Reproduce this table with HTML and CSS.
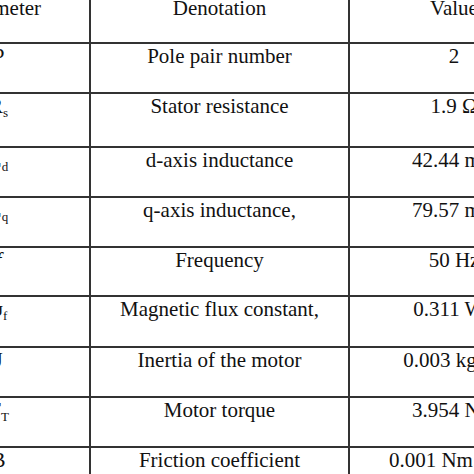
FILE: index.html
```html
<!DOCTYPE html>
<html>
<head>
<meta charset="utf-8">
<link rel="stylesheet" href="styles.css">
</head>
<body>
<table class="params">
  <colgroup>
    <col class="c-sym">
    <col class="c-den">
    <col class="c-val">
  </colgroup>
  <tr class="r-head"><th>Parameter</th><th>Denotation</th><th>Value</th></tr>
  <tr class="r-std"><td>P</td><td>Pole pair number</td><td>2</td></tr>
  <tr class="r-tall"><td>R<sub>s</sub></td><td>Stator resistance</td><td>1.9 Ω</td></tr>
  <tr class="r-std"><td>L<sub>d</sub></td><td>d-axis inductance</td><td>42.44 mH</td></tr>
  <tr class="r-std"><td>L<sub>q</sub></td><td>q-axis inductance,</td><td>79.57 mH</td></tr>
  <tr class="r-short"><td><i>f</i></td><td>Frequency</td><td>50 Hz</td></tr>
  <tr class="r-long"><td>ψ<sub>f</sub></td><td>Magnetic flux constant,</td><td>0.311 Wb</td></tr>
  <tr class="r-std"><td>J</td><td>Inertia of the motor</td><td>0.003 kg.m²</td></tr>
  <tr class="r-std"><td>T<sub>T</sub></td><td>Motor torque</td><td>3.954 Nm</td></tr>
  <tr class="r-std"><td>B</td><td>Friction coefficient</td><td>0.001 Nm.s/rad</td></tr>
</table>
</body>
</html>
```
FILE: styles.css
```css
html, body {
  margin: 0;
  padding: 0;
  width: 474px;
  height: 474px;
  overflow: hidden;
  background: #ffffff;
}

.params {
  border-collapse: collapse;
  table-layout: fixed;
  width: 652px;
  margin-left: -94px;
  margin-top: -6px;
  font-family: "Liberation Serif", "Times New Roman", serif;
  font-size: 21px;
  line-height: 24px;
  color: #111111;
}

.c-sym { width: 183px; }
.c-den { width: 259px; }
.c-val { width: 210px; }

.params th,
.params td {
  border: 2px solid #333333;
  padding: 0 2px;
  text-align: center;
  vertical-align: top;
  font-weight: normal;
  white-space: nowrap;
  overflow: hidden;
}

.params sub {
  font-size: 13px;
  line-height: 0;
  vertical-align: -4px;
}

.r-head th { height: 46px; }
.r-std td { height: 48px; }
.r-tall td { height: 52px; }
.r-short td { height: 47px; }
.r-long td { height: 49px; }
```
